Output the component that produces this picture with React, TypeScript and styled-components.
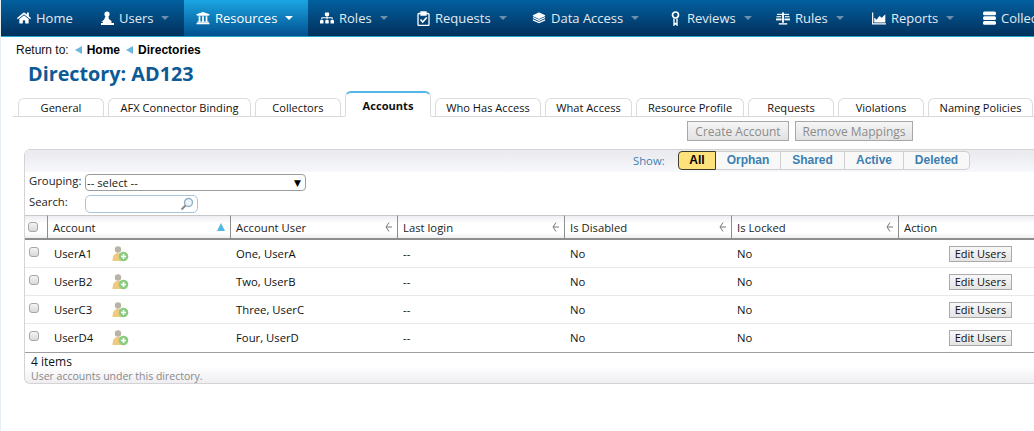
import React from 'react'
import styled, { createGlobalStyle } from 'styled-components'
import { FaHome, FaUniversity, FaSitemap } from 'react-icons/fa'

const GlobalStyle = createGlobalStyle`
  html, body { margin:0; padding:0; background:#fff; overflow:hidden; }
  body { font-family:"Open Sans","DejaVu Sans",sans-serif; font-size:11.3px; color:#111; width:1034px; height:431px; }
`

const Page = styled.div`
  width:1034px;
  height:431px;
  overflow:hidden;
  border-left:1px solid #e6edf3;
  box-sizing:border-box;
`

const Nav = styled.nav`
  display:flex;
  height:36px;
  margin-left:-1px;
  padding-left:5px;
  background:linear-gradient(#02609f,#02305c);
  border-bottom:1px solid #1fa8c9;
  white-space:nowrap;
  overflow:hidden;
`

const NavItem = styled.div<{ $w: number; $active?: boolean }>`
  display:flex;
  align-items:center;
  flex:none;
  box-sizing:border-box;
  width:${p => p.$w}px;
  height:36px;
  padding-left:12px;
  font-size:13px;
  background:${p => p.$active ? 'linear-gradient(#1aa6e2,#02508f)' : 'none'};
  color:${p => p.$active ? '#fff' : '#e3ebf3'};
`

const NavIcon = styled.span`
  display:flex;
  align-items:center;
  justify-content:center;
  flex:none;
  width:14px;
  margin-right:5px;
  color:#fff;
  font-size:14px;
`

const Caret = styled.span<{ $active?: boolean }>`
  margin-left:8px;
  width:0;
  height:0;
  border-left:4px solid transparent;
  border-right:4px solid transparent;
  border-top:4px solid ${p => p.$active ? '#fff' : '#6d8fae'};
`

const Crumbs = styled.div`
  display:flex;
  align-items:center;
  height:15px;
  margin:5px 0 0 15px;
  font-family:"Liberation Sans",sans-serif;
  font-size:12px;
  color:#111;
  b { color:#000; }
`

const CrumbArrow = styled.span`
  width:0;
  height:0;
  margin:0 5px 0 6px;
  border-top:4px solid transparent;
  border-bottom:4px solid transparent;
  border-right:7px solid #6cb5dc;
`

const Title = styled.h1`
  margin:4px 0 0 27px;
  height:26px;
  line-height:26px;
  font-size:19.8px;
  font-weight:700;
  color:#0d5a96;
`

const Tabs = styled.div`
  display:flex;
  align-items:flex-end;
  gap:4px;
  height:26px;
  margin:3px 0 0 12px;
  padding-left:5px;
  border-bottom:1px solid #d8d8d8;
`

const Tab = styled.div<{ $w: number; $active?: boolean }>`
  width:${p => p.$w}px;
  flex:none;
  box-sizing:border-box;
  text-align:center;
  height:${p => p.$active ? 26 : 18}px;
  line-height:${p => p.$active ? 26 : 18}px;
  margin-bottom:${p => p.$active ? -1 : 0}px;
  border:1px solid #dcdcdc;
  border-bottom:${p => p.$active ? '1px solid #fff' : 'none'};
  border-top:${p => p.$active ? '2px solid #54b6e6' : '1px solid #dcdcdc'};
  border-radius:6px 6px 0 0;
  background:#fff;
  font-size:11.1px;
  font-weight:${p => p.$active ? 700 : 400};
  color:#111;
`

const Actions = styled.div`
  display:flex;
  gap:6px;
  height:20px;
  margin:4px 0 0 686px;
`

const GrayButton = styled.div<{ $w: number }>`
  display:flex;
  align-items:center;
  justify-content:center;
  box-sizing:border-box;
  width:${p => p.$w}px;
  height:20px;
  border:1px solid #a8a8a8;
  background:linear-gradient(#f6f6f6,#e2e2e2);
  color:#8b8b8b;
  font-size:12px;
`

const Panel = styled.section`
  width:1060px;
  box-sizing:border-box;
  margin:8px 0 0 23px;
  border:1px solid #d4d4d4;
  border-right:none;
  border-radius:6px 0 0 6px;
`

const PanelHead = styled.div`
  display:flex;
  align-items:flex-start;
  height:21px;
  padding:1px 0 0 608px;
  background:linear-gradient(#e9e9ee,#f7f8fb);
`

const ShowLabel = styled.span`
  width:45px;
  line-height:19px;
  color:#3c7fb1;
`

const Seg = styled.div<{ $w: number; $on?: boolean }>`
  width:${p => p.$w}px;
  height:19px;
  line-height:17px;
  box-sizing:border-box;
  text-align:center;
  font-family:"Liberation Sans",sans-serif;
  font-weight:700;
  font-size:12px;
  border:1px solid ${p => p.$on ? '#3d3d2a' : '#cfcfcf'};
  border-left-width:${p => p.$on ? 1 : 0}px;
  background:${p => p.$on ? '#ffe27a' : '#f8f8f8'};
  color:${p => p.$on ? '#000' : '#3c7fb1'};
  border-radius:${p => p.$on ? '4px 0 0 4px' : 0};
  &:last-child { border-radius:0 5px 5px 0; }
`

const FilterRow = styled.div`
  display:flex;
  align-items:center;
  height:21px;
  padding-left:4px;
  color:#222;
  label { width:56px; padding-bottom:4px; }
`

const Select = styled.div`
  display:flex;
  align-items:center;
  justify-content:space-between;
  box-sizing:border-box;
  width:221px;
  height:17px;
  padding:0 4px 0 1px;
  border:1px solid #9c9c9c;
  border-radius:4px;
  i { font-style:normal; font-size:9px; color:#000; }
`

const SearchBox = styled.div`
  display:flex;
  align-items:center;
  justify-content:flex-end;
  box-sizing:border-box;
  width:113px;
  height:18px;
  padding-right:3px;
  border:1px solid #a9c4da;
  border-radius:5px;
`

const Grid = styled.div`
  display:grid;
  margin-top:1px;
  grid-template-columns:23px 183px 167px 167px 167px 167px 1fr;
`

const Head = styled.div`
  display:flex;
  align-items:center;
  justify-content:space-between;
  height:22px;
  padding:0 5px;
  border-top:1px solid #c8c8c8;
  border-bottom:2px solid #8e8e8e;
  border-right:1px solid #8e8e8e;
  background:linear-gradient(#eeeef2 0,#fff 35%,#fff 75%,#f0f0f3 100%);
  color:#222;
  &:last-child { border-right:none; }
`

const Cell = styled.div<{ $last?: boolean }>`
  display:flex;
  align-items:center;
  height:27px;
  padding:0 5px;
  border-bottom:1px solid ${p => p.$last ? 'transparent' : '#e8e8e8'};
  color:#111;
`

const AccountName = styled.span`
  width:59px;
  padding-left:1px;
  box-sizing:border-box;
  flex:none;
`

const PersonWrap = styled.span`
  display:flex;
  margin-top:1px;
`

const Check = styled.span<{ $head?: boolean }>`
  display:block;
  flex:none;
  width:8px;
  height:8px;
  margin-left:${p => p.$head ? -2 : -1}px;
  margin-top:${p => p.$head ? 0 : -3}px;
  border:1px solid #a6a6a6;
  border-radius:3px;
  background:linear-gradient(#f4f4f4,#d9d9d9);
`

const EditButton = styled.div`
  display:flex;
  align-items:center;
  justify-content:center;
  box-sizing:border-box;
  width:63px;
  height:16px;
  margin-left:45px;
  border:1px solid #aaa;
  background:linear-gradient(#f8f8f8,#e4e4e4);
  font-size:11px;
  color:#111;
`

const Footer = styled.div`
  border-top:1px solid #9e9e9e;
  padding:2px 0 0 6px;
  height:28px;
  background:linear-gradient(#fff 45%,#eeeef2);
  border-radius:0 0 0 6px;
  line-height:14px;
  font-size:12px;
  color:#111;
  small { display:block; font-size:10.5px; color:#888; }
`

const UsersIcon = () => (
  <svg width="14" height="14" viewBox="0 0 14 14" fill="currentColor">
    <circle cx="7" cy="3" r="2.6" />
    <path d="M5.600 5h2.800l.5 3 2.600 2v2H2.800v-1.500L1 11l3-2.200z" />
    <rect x="1" y="12" width="13" height="2" />
  </svg>
)

const RequestIcon = () => (
  <svg width="13" height="15" viewBox="0 0 13 15" fill="none" stroke="currentColor" strokeWidth="1.300">
    <rect x="1" y="2.500" width="11" height="12" rx="1" />
    <path d="M4 1h5v3H4z" fill="currentColor" />
    <path d="M3.500 8.500l2.200 2.500 4-4.500" strokeWidth="1.600" />
  </svg>
)

const DataIcon = () => (
  <svg width="15" height="12" viewBox="0 0 15 12" fill="none" stroke="currentColor">
    <path d="M7.500 0.500L14 3.500 7.500 6.500 1 3.500z" fill="currentColor" />
    <path d="M1 5.500l6.500 3 6.500-3M1 8l6.500 3L14 8" strokeWidth="1.300" />
  </svg>
)

const ReviewIcon = () => (
  <svg width="9" height="15" viewBox="0 0 9 15" fill="none" stroke="currentColor" strokeWidth="1.700">
    <circle cx="4.500" cy="4" r="3" />
    <path d="M3 7.500V14l1.500-1.500L6 14V7.500" strokeWidth="1.400" />
  </svg>
)

const RulesIcon = () => (
  <svg width="15" height="13" viewBox="0 0 15 13" fill="currentColor">
    <rect x="6.500" y="0" width="2" height="11" />
    <rect x="3" y="11.500" width="9" height="1.500" />
    <rect x="1" y="1.500" width="13" height="1.200" />
    <rect x="0.500" y="4" width="5" height="1.200" />
    <rect x="0" y="6.500" width="6" height="2" />
    <rect x="9.500" y="4" width="5" height="1.200" />
    <rect x="9" y="6.500" width="6" height="2" />
  </svg>
)

const ReportsIcon = () => (
  <svg width="15" height="13" viewBox="0 0 15 13" fill="none" stroke="currentColor">
    <path d="M0.700 0v12.300H15" strokeWidth="1.300" />
    <path d="M2.500 10.500V6l2.500 2 3-4 2.500 2L14 2.500v8z" fill="currentColor" strokeWidth="0.500" />
  </svg>
)

const CollectorsIcon = () => (
  <svg width="13" height="14" viewBox="0 0 13 14" fill="currentColor">
    <rect x="0" y="0.500" width="13" height="3.800" rx="1.500" />
    <rect x="0" y="5.200" width="13" height="3.800" rx="1.500" />
    <rect x="0" y="9.900" width="13" height="3.800" rx="1.500" />
  </svg>
)

const PersonAdd = () => (
  <svg width="17" height="16" viewBox="0 0 17 16">
    <circle cx="6" cy="3.500" r="3.200" fill="#b9b3a4" />
    <path d="M0.500 15c0-5.500 2-8 5.500-8s5.500 2.500 5.500 8z" fill="#eccb7e" />
    <circle cx="11.500" cy="10.500" r="4.800" fill="#8ccb83" />
    <path d="M11.500 8v5M9 10.500h5" stroke="#fff" strokeWidth="1.600" />
  </svg>
)

const Magnifier = () => (
  <svg width="14" height="14" viewBox="0 0 14 14" fill="none">
    <circle cx="8.500" cy="5.500" r="4" stroke="#8fb0c8" strokeWidth="1.400" fill="#eef6fb" />
    <path d="M5.500 8.500L1.500 12.500" stroke="#8c8c8c" strokeWidth="2.200" />
  </svg>
)

const SortUp = () => (
  <svg width="8" height="8" viewBox="0 0 8 8">
    <path d="M4 0L8 8H0z" fill="#4fb8e4" />
  </svg>
)

const SortBoth = () => (
  <svg width="7" height="10" viewBox="0 0 7 10" fill="none" stroke="#777">
    <path d="M4 0.500L1 5l3 4.500M1 5h6" />
  </svg>
)

const menu = [
  { label: 'Home', w: 83, icon: <FaHome /> },
  { label: 'Users', w: 96, icon: <UsersIcon />, caret: true },
  { label: 'Resources', w: 124, icon: <FaUniversity />, caret: true, active: true },
  { label: 'Roles', w: 96, icon: <FaSitemap />, caret: true },
  { label: 'Requests', w: 116, icon: <RequestIcon />, caret: true },
  { label: 'Data Access', w: 136, icon: <DataIcon />, caret: true },
  { label: 'Reviews', w: 108, icon: <ReviewIcon />, caret: true },
  { label: 'Rules', w: 96, icon: <RulesIcon />, caret: true },
  { label: 'Reports', w: 110, icon: <ReportsIcon />, caret: true },
  { label: 'Collectors', w: 120, icon: <CollectorsIcon />, caret: true },
]

const tabs: [string, number][] = [
  ['General', 86], ['AFX Connector Binding', 143], ['Collectors', 86], ['Accounts', 86], ['Who Has Access', 106],
  ['What Access', 87], ['Resource Profile', 108], ['Requests', 86], ['Violations', 86], ['Naming Policies', 105],
]

const segs: [string, number][] = [['All', 38], ['Orphan', 65], ['Shared', 64], ['Active', 59], ['Deleted', 66]]

const rows = [
  ['UserA1', 'One, UserA'],
  ['UserB2', 'Two, UserB'],
  ['UserC3', 'Three, UserC'],
  ['UserD4', 'Four, UserD'],
]

const App = () => (
  <Page>
    <GlobalStyle />
    <Nav>
      {menu.map(m => (
        <NavItem key={m.label} $w={m.w} $active={m.active}>
          <NavIcon>{m.icon}</NavIcon>{m.label}
          {m.caret && <Caret $active={m.active} />}
        </NavItem>
      ))}
    </Nav>
    <Crumbs>
      Return to:<CrumbArrow /><b>Home</b><CrumbArrow /><b>Directories</b>
    </Crumbs>
    <Title>Directory: AD123</Title>
    <Tabs>
      {tabs.map(([t, w]) => <Tab key={t} $w={w} $active={t === 'Accounts'}>{t}</Tab>)}
    </Tabs>
    <Actions>
      <GrayButton $w={102}>Create Account</GrayButton>
      <GrayButton $w={118}>Remove Mappings</GrayButton>
    </Actions>
    <Panel>
      <PanelHead>
        <ShowLabel>Show:</ShowLabel>
        {segs.map(([s, w]) => <Seg key={s} $w={w} $on={s === 'All'}>{s}</Seg>)}
      </PanelHead>
      <FilterRow>
        <label>Grouping:</label>
        <Select>-- select --<i>▼</i></Select>
      </FilterRow>
      <FilterRow>
        <label>Search:</label>
        <SearchBox><Magnifier /></SearchBox>
      </FilterRow>
      <Grid>
        <Head><Check $head /></Head>
        <Head>Account<SortUp /></Head>
        <Head>Account User<SortBoth /></Head>
        <Head>Last login<SortBoth /></Head>
        <Head>Is Disabled<SortBoth /></Head>
        <Head>Is Locked<SortBoth /></Head>
        <Head>Action</Head>
        {rows.map(([a, u], i) => {
          const last = i === rows.length - 1
          return (
            <React.Fragment key={a}>
              <Cell $last={last}><Check /></Cell>
              <Cell $last={last}><AccountName>{a}</AccountName><PersonWrap><PersonAdd /></PersonWrap></Cell>
              <Cell $last={last}>{u}</Cell>
              <Cell $last={last}>--</Cell>
              <Cell $last={last}>No</Cell>
              <Cell $last={last}>No</Cell>
              <Cell $last={last}><EditButton>Edit Users</EditButton></Cell>
            </React.Fragment>
          )
        })}
      </Grid>
      <Footer>
        4 items
        <small>User accounts under this directory.</small>
      </Footer>
    </Panel>
  </Page>
)

export default App
